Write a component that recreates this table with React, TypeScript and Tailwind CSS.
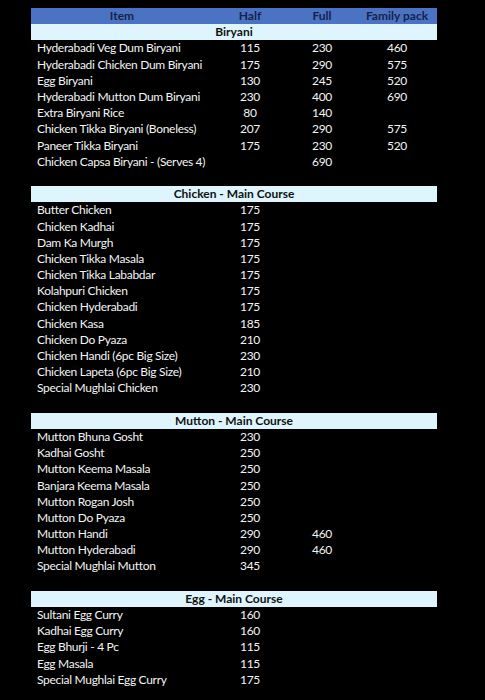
import React from "react";

type Row = [string, string, string?, string?];

const sections: { title: string; rows: Row[] }[] = [
  {
    title: "Biryani",
    rows: [
      ["Hyderabadi Veg Dum Biryani", "115", "230", "460"],
      ["Hyderabadi Chicken Dum Biryani", "175", "290", "575"],
      ["Egg Biryani", "130", "245", "520"],
      ["Hyderabadi Mutton Dum Biryani", "230", "400", "690"],
      ["Extra Biryani Rice", "80", "140", ""],
      ["Chicken Tikka Biryani (Boneless)", "207", "290", "575"],
      ["Paneer Tikka Biryani", "175", "230", "520"],
      ["Chicken Capsa Biryani - (Serves 4)", "", "690", ""],
    ],
  },
  {
    title: "Chicken - Main Course",
    rows: [
      ["Butter Chicken", "175"],
      ["Chicken Kadhai", "175"],
      ["Dam Ka Murgh", "175"],
      ["Chicken Tikka Masala", "175"],
      ["Chicken Tikka Lababdar", "175"],
      ["Kolahpuri Chicken", "175"],
      ["Chicken Hyderabadi", "175"],
      ["Chicken Kasa", "185"],
      ["Chicken Do Pyaza", "210"],
      ["Chicken Handi (6pc Big Size)", "230"],
      ["Chicken Lapeta (6pc Big Size)", "210"],
      ["Special Mughlai Chicken", "230"],
    ],
  },
  {
    title: "Mutton - Main Course",
    rows: [
      ["Mutton Bhuna Gosht", "230"],
      ["Kadhai Gosht", "250"],
      ["Mutton Keema Masala", "250"],
      ["Banjara Keema Masala", "250"],
      ["Mutton Rogan Josh", "250"],
      ["Mutton Do Pyaza", "250"],
      ["Mutton Handi", "290", "460"],
      ["Mutton Hyderabadi", "290", "460"],
      ["Special Mughlai Mutton", "345"],
    ],
  },
  {
    title: "Egg - Main Course",
    rows: [
      ["Sultani Egg Curry", "160"],
      ["Kadhai Egg Curry", "160"],
      ["Egg Bhurji - 4 Pc", "115"],
      ["Egg Masala", "115"],
      ["Special Mughlai Egg Curry", "175"],
    ],
  },
];

const cols = "grid grid-cols-[182px_74px_70px_80px]";

const App = () => {
  return (
    <div className="min-h-[700px] w-[485px] bg-black pt-2 pl-[31px] text-[12px] font-['Lato','Liberation_Sans',sans-serif] leading-none">
      <div className="w-[406px]">
        {/* column heads */}
        <div className={`${cols} h-[16.2px] items-center bg-[#4a73c4] font-bold text-[#17224a]`}>
          <div className="text-center">Item</div>
          <div className="text-center">Half</div>
          <div className="text-center">Full</div>
          <div className="text-center">Family pack</div>
        </div>

        {sections.map((section, i) => (
          <div key={section.title}>
            {i > 0 && <div className="h-[16.2px]" />}
            <div className="flex h-[16.2px] items-center justify-center bg-[#def5fd] font-bold text-[#111]">
              {section.title}
            </div>
            {section.rows.map((row) => (
              <div key={row[0]} className={`${cols} h-[16.2px] items-center text-[#f4f4f4] tracking-[-0.3px]`}>
                <div className="pl-[6px] whitespace-nowrap">{row[0]}</div>
                <div className="text-center">{row[1]}</div>
                <div className="text-center">{row[2]}</div>
                <div className="text-center">{row[3]}</div>
              </div>
            ))}
          </div>
        ))}
      </div>
    </div>
  );
};

export default App;
